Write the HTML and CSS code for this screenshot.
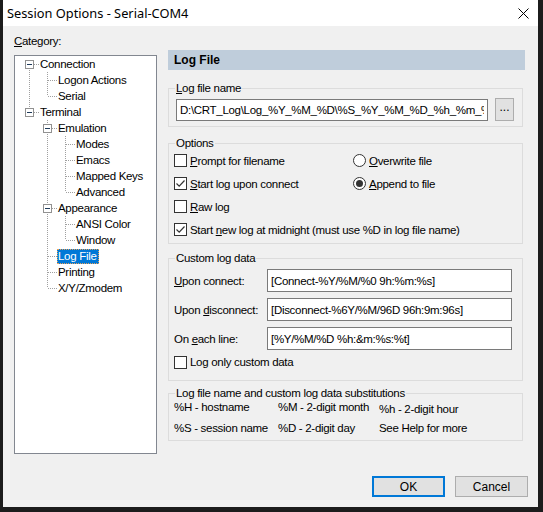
FILE: index.html
```html
<!DOCTYPE html>
<html lang="en">
<head>
    <meta charset="UTF-8">
    <title>Session Options - Serial-COM4</title>
    <link rel="stylesheet" href="styles.css">
</head>
<body>
    <div class="window">
        <div class="titlebar">
            <span class="title">Session Options - Serial-COM4</span>
            <svg class="close" width="11" height="11" viewBox="0 0 11 11">
                <path d="M0.5 0.5 L10.5 10.5 M10.5 0.5 L0.5 10.5" stroke="#000" stroke-width="1"/>
            </svg>
        </div>

        <div class="main">
            <div class="left">
                <div class="cat-label"><u>C</u>ategory:</div>
                <div class="tree">
                    <ul class="root">
                        <li class="first">
                            <div class="row"><span class="toggle"></span><span class="label">Connection</span></div>
                            <ul>
                                <li><div class="row"><span class="label">Logon Actions</span></div></li>
                                <li class="last"><div class="row"><span class="label">Serial</span></div></li>
                            </ul>
                        </li>
                        <li class="last">
                            <div class="row"><span class="toggle"></span><span class="label">Terminal</span></div>
                            <ul>
                                <li>
                                    <div class="row"><span class="toggle"></span><span class="label">Emulation</span></div>
                                    <ul>
                                        <li><div class="row"><span class="label">Modes</span></div></li>
                                        <li><div class="row"><span class="label">Emacs</span></div></li>
                                        <li><div class="row"><span class="label">Mapped Keys</span></div></li>
                                        <li class="last"><div class="row"><span class="label">Advanced</span></div></li>
                                    </ul>
                                </li>
                                <li>
                                    <div class="row"><span class="toggle"></span><span class="label">Appearance</span></div>
                                    <ul>
                                        <li><div class="row"><span class="label">ANSI Color</span></div></li>
                                        <li class="last"><div class="row"><span class="label">Window</span></div></li>
                                    </ul>
                                </li>
                                <li><div class="row"><span class="label selected">Log File</span></div></li>
                                <li><div class="row"><span class="label">Printing</span></div></li>
                                <li class="last"><div class="row"><span class="label">X/Y/Zmodem</span></div></li>
                            </ul>
                        </li>
                    </ul>
                </div>
            </div>

            <div class="right">
                <div class="page-header">Log File</div>

                <fieldset class="group group-file">
                    <legend><u>L</u>og file name</legend>
                    <div class="file-row">
                        <input class="text-box file-box" type="text" readonly value="D:\CRT_Log\Log_%Y_%M_%D\%S_%Y_%M_%D_%h_%m_%s.log">
                        <button class="browse">...</button>
                    </div>
                </fieldset>

                <fieldset class="group group-options">
                    <legend>Options</legend>
                    <div class="options-grid">
                        <div class="opt">
                            <span class="check"></span><span><u>P</u>rompt for filename</span>
                        </div>
                        <div class="opt">
                            <span class="radio"></span><span><u>O</u>verwrite file</span>
                        </div>
                        <div class="opt">
                            <span class="check checked"><svg width="11" height="11" viewBox="0 0 11 11"><path d="M1.5 5.5 L4.2 8.2 L9.5 2.5" fill="none" stroke="#333" stroke-width="1.2"/></svg></span><span><u>S</u>tart log upon connect</span>
                        </div>
                        <div class="opt">
                            <span class="radio on"></span><span><u>A</u>ppend to file</span>
                        </div>
                        <div class="opt wide">
                            <span class="check"></span><span><u>R</u>aw log</span>
                        </div>
                        <div class="opt wide">
                            <span class="check checked"><svg width="11" height="11" viewBox="0 0 11 11"><path d="M1.5 5.5 L4.2 8.2 L9.5 2.5" fill="none" stroke="#333" stroke-width="1.2"/></svg></span><span>Start <u>n</u>ew log at midnight (must use %D in log file name)</span>
                        </div>
                    </div>
                </fieldset>

                <fieldset class="group group-custom">
                    <legend>Custom log data</legend>
                    <div class="field-row">
                        <span class="field-label"><u>U</u>pon connect:</span>
                        <input class="text-box data-box" type="text" readonly value="[Connect-%Y/%M/%0 9h:%m:%s]">
                    </div>
                    <div class="field-row">
                        <span class="field-label">Upon <u>d</u>isconnect:</span>
                        <input class="text-box data-box" type="text" readonly value="[Disconnect-%6Y/%M/96D 96h:9m:96s]">
                    </div>
                    <div class="field-row">
                        <span class="field-label">On <u>e</u>ach line:</span>
                        <input class="text-box data-box" type="text" readonly value="[%Y/%M/%D %h:&amp;m:%s:%t]">
                    </div>
                    <div class="opt">
                        <span class="check"></span><span>Lo<u>g</u> only custom data</span>
                    </div>
                </fieldset>

                <fieldset class="group group-subs">
                    <legend>Log file name and custom log data substitutions</legend>
                    <div class="subs-grid">
                        <span>%H - hostname</span>
                        <span>%M - 2-digit month</span>
                        <span class="low">%h - 2-digit hour</span>
                        <span>%S - session name</span>
                        <span>%D - 2-digit day</span>
                        <span>See Help for more</span>
                    </div>
                </fieldset>
            </div>
        </div>

        <div class="footer">
            <button class="btn default">OK</button>
            <button class="btn">Cancel</button>
        </div>
    </div>
</body>
</html>
```

FILE: styles.css
```css
body {
    margin: 0;
    background-color: #1c1c1c;
    font-family: "Liberation Sans", Arial, sans-serif;
    font-size: 11.5px;
    letter-spacing: -0.3px;
    color: #000;
}
.window {
    margin-left: 3px;
    width: 535px;
    height: 507px;
    background: #f0f0f0;
    display: flex;
    flex-direction: column;
}
.titlebar {
    height: 26px;
    background: #fff;
    display: flex;
    align-items: center;
    justify-content: space-between;
    padding-left: 4px;
}
.title {
    font-family: "Noto Sans", sans-serif;
    font-size: 12.8px;
    letter-spacing: 0;
}
.close {
    margin-right: 9px;
    margin-top: 1px;
}
.main {
    display: flex;
    padding: 8px 0 0 11px;
}
.left {
    width: 143px;
}
.cat-label {
    line-height: 14px;
    margin-bottom: 7px;
}
.tree {
    height: 399px;
    box-sizing: border-box;
    border: 1px solid #828790;
    background: #fff;
}

/* tree lines */
.tree ul {
    list-style: none;
    margin: 0;
    padding: 0 0 0 18px;
}
.tree ul.root {
    padding-left: 0;
}
.tree li {
    position: relative;
}
.tree li::before {
    content: "";
    position: absolute;
    left: 14px;
    top: 0;
    bottom: 0;
    width: 1px;
    background: repeating-linear-gradient(to bottom, #a0a0a0 0 1px, transparent 1px 2px);
}
.tree li.last::before {
    bottom: auto;
    height: 8px;
}
.tree .root > li.first::before {
    top: 8px;
}
.row {
    position: relative;
    height: 16px;
    display: flex;
    align-items: center;
    padding-left: 24px;
}
.row::before {
    content: "";
    position: absolute;
    left: 15px;
    top: 8px;
    width: 9px;
    height: 1px;
    background: repeating-linear-gradient(to right, #a0a0a0 0 1px, transparent 1px 2px);
}
.toggle {
    position: absolute;
    left: 10px;
    top: 4px;
    width: 9px;
    height: 9px;
    box-sizing: border-box;
    border: 1px solid #919191;
    background: #fff;
    z-index: 1;
}
.toggle::after {
    content: "";
    position: absolute;
    left: 1px;
    top: 3px;
    width: 5px;
    height: 1px;
    background: #1e3a5a;
}
.label {
    padding: 0 1px;
    line-height: 15px;
    white-space: nowrap;
}
.label.selected {
    background: #0078d7;
    color: #fff;
    outline: 1px dotted #e8a25a;
    outline-offset: -1px;
    padding: 0 2px 0 1px;
}

/* right side */
.right {
    margin: 16px 0 0 11px;
    width: 357px;
}
.page-header {
    height: 20px;
    line-height: 20px;
    background: #bfcddb;
    font-weight: bold;
    font-size: 12px;
    letter-spacing: 0;
    padding-left: 6px;
}
.group {
    width: 355px;
    box-sizing: border-box;
    margin: 0;
    border: 1px solid #dcdcdc;
    padding: 0 0 0 5px;
}
.group legend {
    padding: 0 1px;
    margin-left: 1px;
    line-height: 14px;
}
.group-file {
    margin-top: 11px;
    padding-bottom: 5px;
}
.file-row {
    display: flex;
    align-items: center;
    margin: 3px 0 0 2px;
}
.text-box {
    font-family: inherit;
    font-size: inherit;
    letter-spacing: inherit;
    height: 22px;
    box-sizing: border-box;
    border: 1px solid #7a7a7a;
    background: #fff;
    padding: 0 3px;
    outline: none;
    margin: 0;
}
.file-box {
    width: 312px;
}
.browse {
    margin-left: 7px;
    width: 19px;
    height: 23px;
    padding: 0 0 5px;
    border: 1px solid #adadad;
    background: #e1e1e1;
    font-family: inherit;
    font-size: 12px;
}

.group-options {
    margin-top: 9px;
    padding-bottom: 2px;
}
.options-grid {
    display: grid;
    grid-template-columns: 179px 1fr;
    grid-auto-rows: 23px;
    margin-top: -1px;
}
.opt {
    display: flex;
    align-items: center;
    gap: 3px;
    white-space: nowrap;
}
.opt.wide {
    grid-column: 1 / 3;
}
.check {
    width: 13px;
    height: 13px;
    box-sizing: border-box;
    border: 1px solid #333;
    background: #fff;
    display: flex;
}
.radio {
    width: 13px;
    height: 13px;
    box-sizing: border-box;
    border: 1px solid #333;
    border-radius: 50%;
    background: #fff;
    position: relative;
}
.radio.on::after {
    content: "";
    position: absolute;
    left: 2px;
    top: 2px;
    width: 7px;
    height: 7px;
    border-radius: 50%;
    background: #333;
}

.group-custom {
    margin-top: 7px;
    padding-bottom: 7px;
}
.field-row {
    display: flex;
    align-items: center;
    height: 23px;
    margin-top: 6px;
}
.field-row:first-of-type {
    margin-top: 4px;
}
.field-label {
    width: 93px;
    white-space: nowrap;
}
.data-box {
    width: 245px;
    height: 23px;
}
.group-custom .opt {
    height: 22px;
    margin-top: 1px;
}

.group-subs {
    margin-top: 5px;
    padding-bottom: 5px;
}
.group-subs legend {
    margin-top: 2px;
}
.subs-grid {
    display: grid;
    grid-template-columns: 104px 101px 1fr;
    row-gap: 7px;
    line-height: 14px;
    white-space: nowrap;
}
.subs-grid .low {
    position: relative;
    top: 2px;
}

.footer {
    margin-top: auto;
    display: flex;
    justify-content: flex-end;
    gap: 10px;
    padding: 0 10px 10px 0;
}
.btn {
    width: 73px;
    height: 21px;
    border: 1px solid #adadad;
    background: #e1e1e1;
    font-family: inherit;
    font-size: 12px;
    letter-spacing: 0;
    padding: 0;
}
.btn.default {
    border: 2px solid #0078d7;
}
```
